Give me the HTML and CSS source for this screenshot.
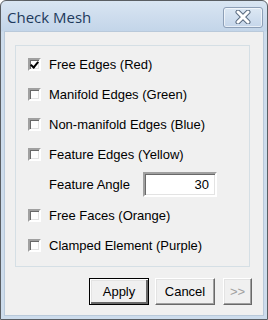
FILE: index.html
```html
<!DOCTYPE html>
<html lang="en">
<head>
    <meta charset="UTF-8">
    <title>Check Mesh</title>
    <link rel="stylesheet" href="styles.css">
</head>
<body>
    <div class="window">
        <div class="titlebar">
            <span class="title">Check Mesh</span>
            <button class="close-btn" type="button">
                <svg width="18" height="14" viewBox="0 0 18 14">
                    <path d="M4 2 L14 12 M14 2 L4 12" stroke="#5a6b80" stroke-width="5" stroke-linecap="round"/>
                    <path d="M4 2 L14 12 M14 2 L4 12" stroke="#ffffff" stroke-width="3" stroke-linecap="round"/>
                </svg>
            </button>
        </div>
        <div class="client">
            <div class="group">
                <label class="option"><span class="check checked"></span>Free Edges (Red)</label>
                <label class="option"><span class="check"></span>Manifold Edges (Green)</label>
                <label class="option"><span class="check"></span>Non-manifold Edges (Blue)</label>
                <label class="option"><span class="check"></span>Feature Edges (Yellow)</label>
                <div class="angle-row">
                    <span class="angle-label">Feature Angle</span>
                    <input class="angle-input" type="text" value="30">
                </div>
                <label class="option"><span class="check"></span>Free Faces (Orange)</label>
                <label class="option"><span class="check"></span>Clamped Element (Purple)</label>
            </div>
            <div class="buttons">
                <button class="btn default" type="button">Apply</button>
                <button class="btn" type="button">Cancel</button>
                <button class="btn small" type="button" disabled>&gt;&gt;</button>
            </div>
        </div>
    </div>
</body>
</html>
```
FILE: styles.css
```css
body {
    margin: 0;
    background-color: #ffffff;
    font-family: "Liberation Sans", Arial, sans-serif;
}
.window {
    width: 268px;
    height: 320px;
    box-sizing: border-box;
    border: 1px solid #5a5e63;
    border-radius: 6px 6px 0 0;
    background: linear-gradient(#d9e5f2, #c3d5e9 30px, #cddcec 31px);
    display: flex;
    flex-direction: column;
}
.titlebar {
    height: 30px;
    display: flex;
    align-items: center;
    justify-content: space-between;
    padding: 0 4px 0 6px;
}
.title {
    font-family: "Open Sans", "Noto Sans", sans-serif;
    font-size: 15px;
    color: #1e3a5c;
    margin-top: 1px;
}
.close-btn {
    width: 40px;
    height: 21px;
    margin-top: 2px;
    padding: 0;
    border: 1px solid #8d9fb7;
    border-radius: 3px;
    background: linear-gradient(#dde8f4, #c5d6ea);
    box-shadow: inset 0 0 0 1px rgba(255, 255, 255, 0.6);
    display: flex;
    align-items: center;
    justify-content: center;
}
.client {
    flex: 1;
    margin: 0 3px 3px 3px;
    background-color: #f0f0f0;
    border: 1px solid #b9c9da;
    display: flex;
    flex-direction: column;
}
.group {
    margin: 13px 13px 0 10px;
    border: 1px solid #d5dfe5;
    padding: 3px 0 6px 12px;
    display: flex;
    flex-direction: column;
}
.option {
    height: 30px;
    display: flex;
    align-items: center;
    font-size: 13px;
    color: #000;
}
.check {
    width: 9px;
    height: 9px;
    margin-right: 8px;
    background-color: #fff;
    border: 2px solid;
    border-color: #a0a0a0 #ffffff #ffffff #a0a0a0;
    box-shadow: inset 1px 1px 0 #696969, inset -1px -1px 0 #e3e3e3;
    position: relative;
}
.check.checked::after {
    content: "";
    position: absolute;
    left: 2px;
    top: 0px;
    width: 3px;
    height: 6px;
    border: solid #000;
    border-width: 0 2px 2px 0;
    transform: rotate(40deg);
}
.angle-row {
    height: 31px;
    display: flex;
    align-items: center;
    padding-left: 21px;
    font-size: 13px;
}
.angle-label {
    width: 94px;
}
.angle-input {
    width: 74px;
    height: 25px;
    box-sizing: border-box;
    border: 2px solid;
    border-color: #a0a0a0 #ffffff #ffffff #a0a0a0;
    box-shadow: inset 1px 1px 0 #696969, inset -1px -1px 0 #e3e3e3;
    background-color: #fff;
    text-align: right;
    padding: 0 6px;
    font-family: "Liberation Sans", Arial, sans-serif;
    font-size: 13px;
    color: #000;
}
.buttons {
    display: flex;
    justify-content: flex-end;
    gap: 6px;
    margin: 11px 11px 0 0;
}
.btn {
    width: 60px;
    height: 27px;
    padding: 0;
    background-color: #f0f0f0;
    border: 1px solid;
    border-color: #ffffff #696969 #696969 #ffffff;
    box-shadow: inset -1px -1px 0 #a0a0a0, inset 1px 1px 0 #e3e3e3;
    font-family: "Liberation Sans", Arial, sans-serif;
    font-size: 13px;
    color: #000;
}
.btn.default {
    border: 1px solid #000;
    box-shadow: inset 1px 1px 0 #ffffff, inset -2px -2px 0 #696969, inset 2px 2px 0 #e3e3e3;
}
.btn.small {
    width: 29px;
    margin-left: 2px;
    color: #a0a0a0;
}
```
